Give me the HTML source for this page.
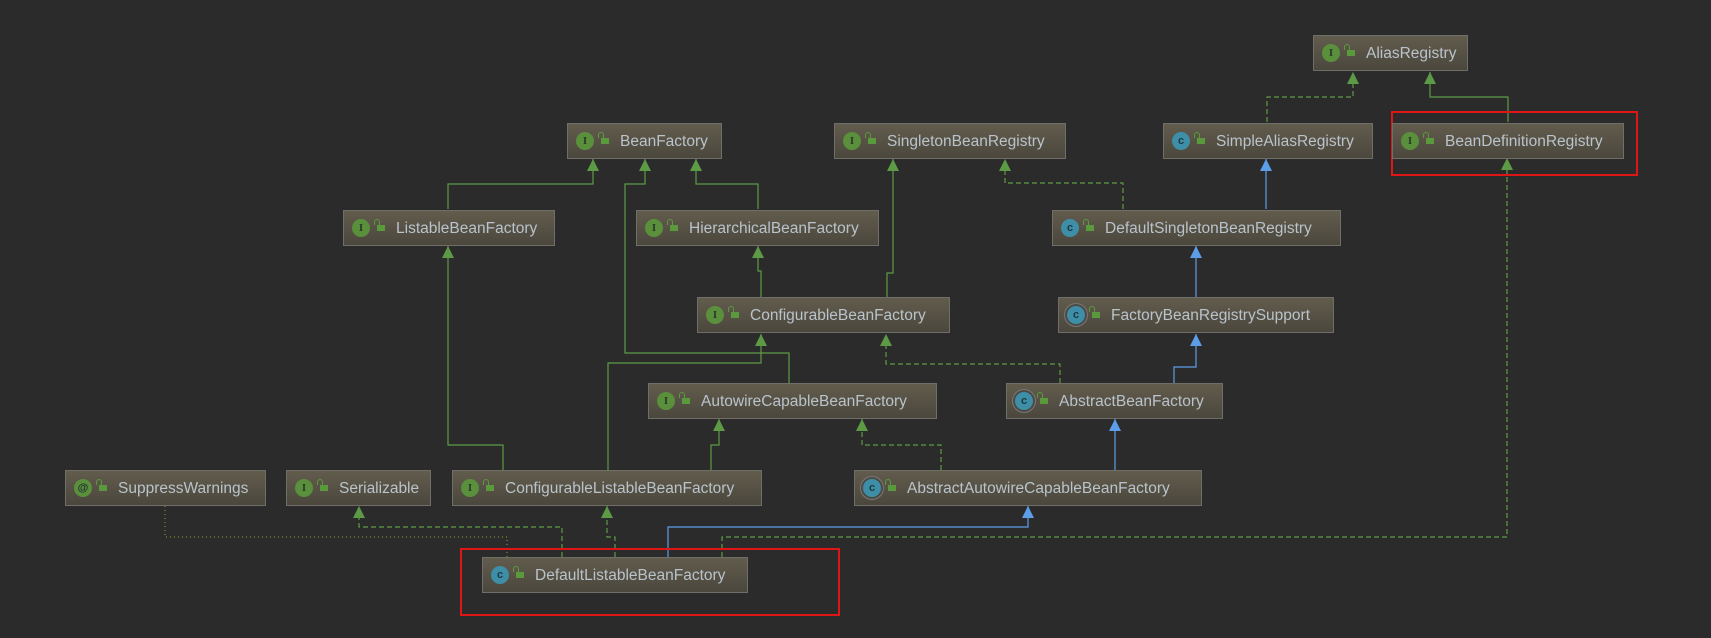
<!DOCTYPE html>
<html><head><meta charset="utf-8"><style>
html,body{margin:0;padding:0;background:#2b2b2b;width:1711px;height:638px;overflow:hidden}
.b{position:absolute;height:36px;box-sizing:border-box;border:1px solid #6f6e68;background:linear-gradient(#625c4d,#4b473d);font:15.5px "Liberation Sans",sans-serif;color:#b9c3cb;line-height:35px;padding-left:52px;white-space:nowrap;overflow:hidden}
.ic{position:absolute;left:8px;top:8px;width:18px;height:18px;border-radius:50%;font:bold 11px "Liberation Serif",serif;line-height:18px;text-align:center;color:#2b3a2b}
.I{background:#5a8f3c}
.C{background:#3d8ea6;color:#1d3a44;font-family:"Liberation Sans",sans-serif}
.A{background:#3d8ea6;color:#1d3a44;font-family:"Liberation Sans",sans-serif;box-shadow:0 0 0 2px #4b4a45,0 0 0 3px #777}
.T{background:#5a8f3c;color:#233;font-family:"Liberation Sans",sans-serif;font-size:11px}
.lk{position:absolute;left:33px;top:14px;width:8px;height:6px;background:#5a9a3c}
.lk:before{content:"";position:absolute;left:-3px;top:-6px;width:4px;height:5px;border:1.5px solid #5a9a3c;border-bottom:none;border-radius:3px 3px 0 0}
</style></head><body>
<svg width="1711" height="638" style="position:absolute;left:0;top:0" fill="none" stroke-width="1.2">
<defs>
<marker id="g" markerWidth="12" markerHeight="12" refX="12" refY="6" orient="auto" markerUnits="userSpaceOnUse" viewBox="0 0 12 12"><path d="M0 0L12 6L0 12Z" fill="#5d9a45" stroke="none"/></marker>
<marker id="bl" markerWidth="12" markerHeight="12" refX="12" refY="6" orient="auto" markerUnits="userSpaceOnUse" viewBox="0 0 12 12"><path d="M0 0L12 6L0 12Z" fill="#5c9ee8" stroke="none"/></marker>
</defs>
<g stroke="#5d9a45">
<path d="M1508 122V97H1430V72" marker-end="url(#g)"/>
<path d="M448 209V184H593V159" marker-end="url(#g)"/>
<path d="M758 209V184H696V159" marker-end="url(#g)"/>
<path d="M789 383V353H625V184H645V159" marker-end="url(#g)"/>
<path d="M761 297V271H758V246" marker-end="url(#g)"/>
<path d="M887 297V273H893V159" marker-end="url(#g)"/>
<path d="M608 470V363H761V334" marker-end="url(#g)"/>
<path d="M503 470V445H448V246" marker-end="url(#g)"/>
<path d="M711 470V445H719V419" marker-end="url(#g)"/>
</g>
<g stroke="#5d9a45" stroke-dasharray="5,3">
<path d="M1267 122V97H1353V72" marker-end="url(#g)"/>
<path d="M1123 209V183H1005V159" marker-end="url(#g)"/>
<path d="M1060 383V364H886V334" marker-end="url(#g)"/>
<path d="M941 470V445H862V419" marker-end="url(#g)"/>
<path d="M562 557V527H359V506" marker-end="url(#g)"/>
<path d="M615 557V537H607V506" marker-end="url(#g)"/>
<path d="M722 557V537H1507V158" marker-end="url(#g)"/>
</g>
<path d="M507 557V537H165V506" stroke="#8a8a2a" stroke-dasharray="1,3"/>
<g stroke="#5c9ee8">
<path d="M1266 209V159" marker-end="url(#bl)"/>
<path d="M1196 297V246" marker-end="url(#bl)"/>
<path d="M1174 383V367H1196V334" marker-end="url(#bl)"/>
<path d="M1115 470V419" marker-end="url(#bl)"/>
<path d="M668 557V527H1028V506" marker-end="url(#bl)"/>
</g>
<rect x="1392" y="112" width="245" height="63" stroke="#e01515" stroke-width="2"/>
<rect x="461" y="549" width="378" height="66" stroke="#e01515" stroke-width="2"/>
</svg>
<div class="b" style="left:1313px;top:35px;width:155px"><span class="ic I">I</span><span class="lk"></span>AliasRegistry</div>
<div class="b" style="left:567px;top:123px;width:155px"><span class="ic I">I</span><span class="lk"></span>BeanFactory</div>
<div class="b" style="left:834px;top:123px;width:232px"><span class="ic I">I</span><span class="lk"></span>SingletonBeanRegistry</div>
<div class="b" style="left:1163px;top:123px;width:210px"><span class="ic C">c</span><span class="lk"></span>SimpleAliasRegistry</div>
<div class="b" style="left:1392px;top:123px;width:232px"><span class="ic I">I</span><span class="lk"></span>BeanDefinitionRegistry</div>
<div class="b" style="left:343px;top:210px;width:212px"><span class="ic I">I</span><span class="lk"></span>ListableBeanFactory</div>
<div class="b" style="left:636px;top:210px;width:243px"><span class="ic I">I</span><span class="lk"></span>HierarchicalBeanFactory</div>
<div class="b" style="left:1052px;top:210px;width:289px"><span class="ic C">c</span><span class="lk"></span>DefaultSingletonBeanRegistry</div>
<div class="b" style="left:697px;top:297px;width:253px"><span class="ic I">I</span><span class="lk"></span>ConfigurableBeanFactory</div>
<div class="b" style="left:1058px;top:297px;width:276px"><span class="ic A">c</span><span class="lk"></span>FactoryBeanRegistrySupport</div>
<div class="b" style="left:648px;top:383px;width:289px"><span class="ic I">I</span><span class="lk"></span>AutowireCapableBeanFactory</div>
<div class="b" style="left:1006px;top:383px;width:217px"><span class="ic A">c</span><span class="lk"></span>AbstractBeanFactory</div>
<div class="b" style="left:65px;top:470px;width:201px"><span class="ic T">@</span><span class="lk"></span>SuppressWarnings</div>
<div class="b" style="left:286px;top:470px;width:145px"><span class="ic I">I</span><span class="lk"></span>Serializable</div>
<div class="b" style="left:452px;top:470px;width:310px"><span class="ic I">I</span><span class="lk"></span>ConfigurableListableBeanFactory</div>
<div class="b" style="left:854px;top:470px;width:348px"><span class="ic A">c</span><span class="lk"></span>AbstractAutowireCapableBeanFactory</div>
<div class="b" style="left:482px;top:557px;width:266px"><span class="ic C">c</span><span class="lk"></span>DefaultListableBeanFactory</div>
</body></html>
